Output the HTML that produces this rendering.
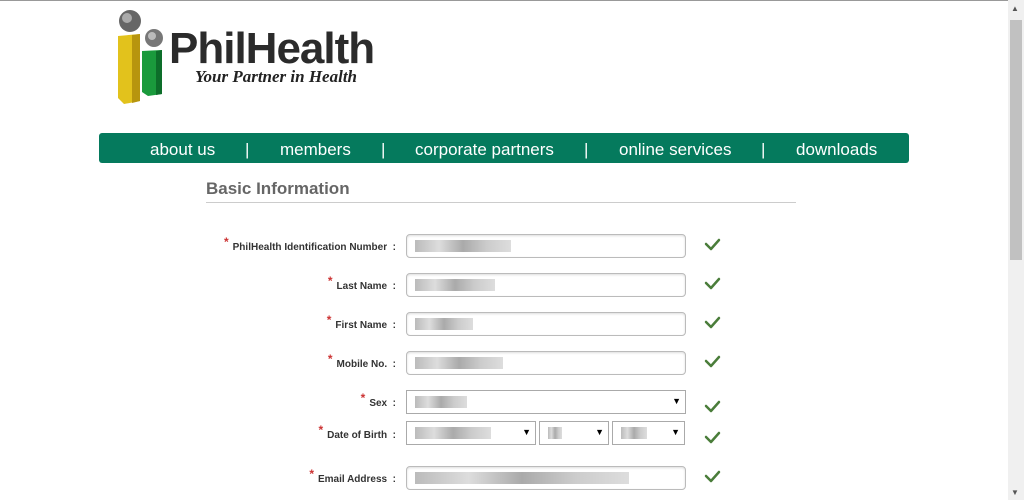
<!DOCTYPE html>
<html><head><meta charset="utf-8"><style>
body{margin:0;width:1024px;height:500px;overflow:hidden;background:#fff;font-family:"Liberation Sans",sans-serif;position:relative}
.a{position:absolute}
.nav{left:99px;top:133px;width:810px;height:30px;background:#057a5d;border-radius:3px;color:#fff;font-size:17px}
.nav span{position:absolute;top:7px}
.lbl{font-size:10px;font-weight:bold;color:#333;text-align:right;width:300px;left:96px}
.lbl b{color:#c33;font-size:12px;position:relative;top:-4px;margin-right:4px}
.in{left:406px;width:278px;height:22px;border:1px solid #bbb;border-radius:4px;box-shadow:inset 0 1px 2px #ddd;background:#fff}
.bl{position:absolute;top:5px;left:8px;height:12px;background:linear-gradient(90deg,#bbb,#ddd,#aaa,#ccc,#ddd)}
.sel{height:22px;border:1px solid #aaa;background:#fff}
.ar{position:absolute;right:4px;top:5px;font-size:9px;color:#000}
</style></head><body>
<div class="a" style="left:0;top:0;width:1008px;height:1px;background:#999"></div>
<div class="a" style="left:1008px;top:0;width:16px;height:500px;background:#f0f0f0"></div>
<div class="a" style="left:1010px;top:20px;width:12px;height:240px;background:#c1c1c1"></div>
<div class="a" style="left:1011px;top:4px;font-size:8px;color:#555">▲</div>
<div class="a" style="left:1011px;top:488px;font-size:8px;color:#555">▼</div>
<svg class="a" style="left:112px;top:6px" width="60" height="100">
<circle cx="18" cy="15" r="11" fill="#666"/><circle cx="15" cy="12" r="5" fill="#aaa"/>
<circle cx="42" cy="32" r="9" fill="#777"/><circle cx="40" cy="30" r="4" fill="#bbb"/>
<polygon points="6,30 28,28 28,95 12,98 6,92" fill="#e2c21c"/><polygon points="20,29 28,28 28,95 20,97" fill="#b7950e"/>
<polygon points="30,45 50,44 50,88 36,90 30,86" fill="#1a9a3c"/><polygon points="44,45 50,44 50,88 44,89" fill="#0d6e2a"/>
</svg>
<div class="a" style="left:169px;top:24px;font-size:44px;font-weight:bold;color:#2b2b2b;letter-spacing:-1px">PhilHealth</div>
<div class="a" style="left:195px;top:67px;font-size:17px;font-weight:bold;font-style:italic;color:#222;font-family:'Liberation Serif',serif">Your Partner in Health</div>
<div class="a nav"><span style="left:51px">about us</span><span style="left:146px">|</span><span style="left:181px">members</span><span style="left:282px">|</span><span style="left:316px">corporate partners</span><span style="left:485px">|</span><span style="left:520px">online services</span><span style="left:662px">|</span><span style="left:697px">downloads</span></div>
<div class="a" style="left:206px;top:179px;font-size:17px;font-weight:bold;color:#666">Basic Information</div>
<div class="a" style="left:206px;top:202px;width:590px;height:1px;background:#ccc"></div>

<div class="a lbl" style="top:239px"><b>*</b>PhilHealth Identification Number &nbsp;:</div>
<div class="a in" style="top:234px"><div class="bl" style="width:96px"></div></div>
<div class="a lbl" style="top:278px"><b>*</b>Last Name &nbsp;:</div>
<div class="a in" style="top:273px"><div class="bl" style="width:80px"></div></div>
<div class="a lbl" style="top:317px"><b>*</b>First Name &nbsp;:</div>
<div class="a in" style="top:312px"><div class="bl" style="width:58px"></div></div>
<div class="a lbl" style="top:356px"><b>*</b>Mobile No. &nbsp;:</div>
<div class="a in" style="top:351px"><div class="bl" style="width:88px"></div></div>
<div class="a lbl" style="top:395px"><b>*</b>Sex &nbsp;:</div>
<div class="a sel" style="left:406px;top:390px;width:278px"><div class="bl" style="width:52px"></div><span class="ar">▼</span></div>
<div class="a lbl" style="top:427px"><b>*</b>Date of Birth &nbsp;:</div>
<div class="a sel" style="left:406px;top:421px;width:128px"><div class="bl" style="width:76px"></div><span class="ar">▼</span></div>
<div class="a sel" style="left:539px;top:421px;width:68px"><div class="bl" style="width:14px"></div><span class="ar">▼</span></div>
<div class="a sel" style="left:612px;top:421px;width:71px"><div class="bl" style="width:26px"></div><span class="ar">▼</span></div>
<div class="a lbl" style="top:471px"><b>*</b>Email Address &nbsp;:</div>
<div class="a in" style="top:466px"><div class="bl" style="width:214px"></div></div>

<svg class="a" style="left:0;top:0" width="1000" height="500">
<g fill="none" stroke="#4a7d3a" stroke-width="2.5" stroke-linecap="round" stroke-linejoin="round">
<path d="M706 244l5 5 8-9"/><path d="M706 283l5 5 8-9"/><path d="M706 322l5 5 8-9"/><path d="M706 361l5 5 8-9"/><path d="M706 406l5 5 8-9"/><path d="M706 437l5 5 8-9"/><path d="M706 476l5 5 8-9"/>
</g></svg>
</body></html>
